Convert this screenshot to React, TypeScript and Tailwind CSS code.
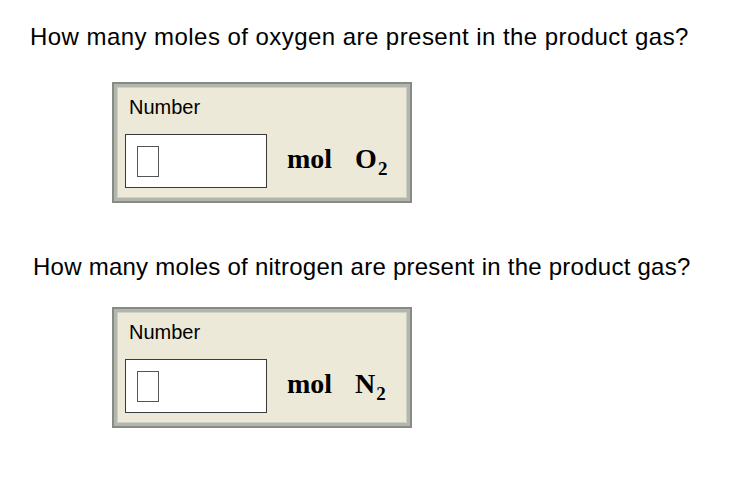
const sans = "font-['Liberation_Sans',Arial,sans-serif]";

function AnswerBox({ unit }: { unit: string }) {
  return (
    <div className="w-[300px] h-[121px] border-2 border-[#868b86]">
      <div className="h-full border-[3px] border-[#b3b6ad] shadow-[inset_0_0_0_1px_#cfd0c5] bg-[#ece9d8] flex flex-col">
        <div className={`${sans} text-[20px] leading-[22px] text-black pl-[12px] pt-[9px]`}>Number</div>
        <div className="flex items-center pl-[8px] mt-[16px]">
          <div className="w-[142px] h-[54px] bg-white border border-[#3a3a3a] flex items-center pl-[11px]">
            <div className="w-[22px] h-[31px] border border-[#555]" />
          </div>
          <div className="ml-[20px] mb-[4px] font-['Liberation_Serif','Times_New_Roman',serif] font-bold text-[28px] leading-none text-black whitespace-nowrap">
            mol
            <span className="ml-[23px]">{unit}</span>
            <span className="relative top-[7px] ml-[1px] text-[19px]">2</span>
          </div>
        </div>
      </div>
    </div>
  );
}

export default function App() {
  return (
    <div className={`w-[752px] h-[488px] bg-white ${sans} text-black`}>
      <div className="pt-[23px] pl-[30px] text-[24px] leading-[28px] tracking-[0.45px] whitespace-nowrap">
        How many moles of oxygen are present in the product gas?
      </div>
      <div className="ml-[112px] mt-[31px]">
        <AnswerBox unit="O" />
      </div>
      <div className="pl-[33px] mt-[50px] text-[24px] leading-[28px] tracking-[0.25px] whitespace-nowrap">
        How many moles of nitrogen are present in the product gas?
      </div>
      <div className="ml-[112px] mt-[26px]">
        <AnswerBox unit="N" />
      </div>
    </div>
  );
}
